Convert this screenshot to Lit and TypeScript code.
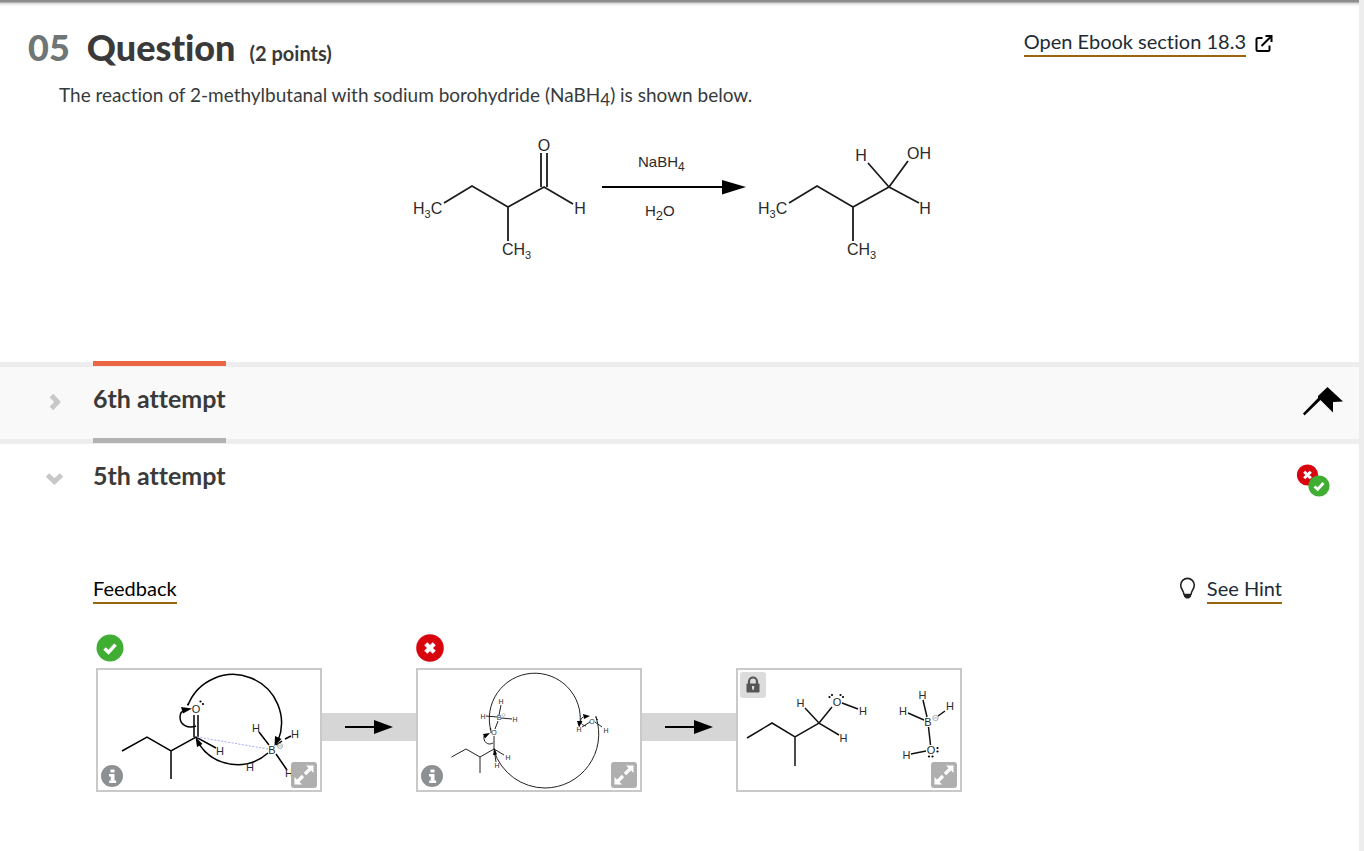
import { LitElement, html, css, svg } from "lit";
import { customElement, property } from "lit/decorators.js";

type Dir = "right" | "down";

const check = svg`<path d="M8.5 14.5 12.5 18.2 19.5 10.6" fill="none" stroke="#fff" stroke-width="3.6"/>`;
const cross = svg`<path d="M9.8 9.8 18.2 18.2 M18.2 9.8 9.8 18.2" fill="none" stroke="#fff" stroke-width="4.4"/>`;

const labels = (size: number, items: [number, number, string][]) =>
  items.map(([x, y, t]) => svg`<text x=${x} y=${y} font-size=${size} text-anchor="middle">${t}</text>`);

const dots = (items: [number, number][], r = 1.1) =>
  items.map(([x, y]) => svg`<circle cx=${x} cy=${y} r=${r} fill="#000"/>`);

@customElement("status-icon")
export class StatusIcon extends LitElement {
  @property() kind: "ok" | "bad" = "ok";

  static styles = css`
    :host { display: block; line-height: 0; }
    svg { display: block; width: 28px; height: 28px; }
  `;

  render() {
    return this.kind === "ok"
      ? html`<svg viewBox="0 0 28 28" role="img" aria-label="Correct"><circle cx="14" cy="14" r="13.5" fill="#3fae33"/>${check}</svg>`
      : html`<svg viewBox="0 0 28 28" role="img" aria-label="Incorrect"><circle cx="14" cy="14" r="13.8" fill="#d8050f"/>${cross}</svg>`;
  }
}

@customElement("app-root")
export class AppRoot extends LitElement {
  static styles = css`
    :host {
      display: block;
      box-sizing: border-box;
      min-height: 100vh;
      border-right: 5px solid #ededed;
      background: #fff linear-gradient(#8b8b8b 0, #8f8f8f 2px, #d4d4d4 3px, #f4f4f4 5px, #fff 7px) no-repeat;
      color: #373a3c;
      font-family: Lato, "Liberation Sans", sans-serif;
      font-size: 19px;
      line-height: 24px;
      font-variant-ligatures: none;
    }
    h1, h2, p { margin: 0; }
    button { font: inherit; font-variant-ligatures: none; color: inherit; background: none; border: 0; padding: 0; margin: 0; cursor: pointer; text-align: left; }
    svg { display: block; }

    .head { display: flex; justify-content: space-between; align-items: flex-start; padding: 25px 86px 0 28px; }
    .title { display: flex; align-items: baseline; font-size: 36px; line-height: 44px; font-weight: 900; color: #3a3a3a; }
    .number { color: #6f7676; font-weight: 900; margin-right: 17px; }
    .points { font-size: 20px; font-weight: 700; margin-left: 14px; }
    .ebook { display: flex; align-items: center; gap: 9px; padding-top: 4px; color: #212b36; text-decoration: none; font-size: 20px; }
    .under { padding-bottom: 2px; border-bottom: 2px solid #99660f; }
    .ebook svg { width: 18px; height: 18px; }
    .prompt { padding: 13px 59px 0; font-size: 19px; line-height: 26px; margin-top: -6px; }
    .prompt sub { font-size: 17px; line-height: 0; vertical-align: -4px; }
    .scheme { display: flex; justify-content: center; padding: 22px 0 92px; }
    .scheme svg { width: 560px; height: 140px; }

    .attempt { display: flex; align-items: flex-start; border-top: 5px solid #ededed; min-height: 72px; box-sizing: content-box; }
    .shaded { background: #f9f9f9; }
    .chevron { width: 93px; padding: 24px 0 0 45px; box-sizing: border-box; }
    .chevron svg { width: 20px; height: 20px; }
    .tab { border-top: 5px solid #ec6645; margin-top: -6px; padding-top: 17px; font-size: 25px; line-height: 30px; font-weight: 700; color: #3a3a3a; }
    .past { border-top-color: #b2b2b2; }
    .mark { margin-left: auto; }
    .pin { padding: 18px 15px 0 0; }
    .mixed { padding: 19px 29px 0 0; }

    .tools { display: flex; justify-content: space-between; padding: 60px 77px 0 93px; font-size: 20px; color: #000; }
    .hint { display: flex; align-items: flex-start; gap: 11px; color: #212b36; }
    .bulb { width: 17px; height: 24px; }

    .steps { display: flex; align-items: flex-end; padding: 30px 40px 59px 96px; }
    .step { width: 226px; }
    .step status-icon { margin-bottom: 6px; }
    .card { position: relative; box-sizing: border-box; height: 124px; border: 2px solid #c9c9c9; background: #fff; }
    .drawing { width: 222px; height: 120px; }
    .corner { position: absolute; display: block; }
    .corner svg { width: 26px; height: 26px; }
    .info { left: 1px; bottom: 1px; }
    .expand { right: 3px; bottom: 2px; }
    .lock { left: 2px; top: 2px; }
    .link { width: 94px; height: 28px; background: #d6d6d6; margin-bottom: 51px; }
    text { font-family: "Liberation Sans", Arial, sans-serif; fill: #2b2b2b; }
  `;

  private chevron(dir: Dir) {
    const d = dir === "right" ? "M6.5 4.5 12.5 11 6.5 17.5" : "M2.5 7 9.5 13.5 16.5 7";
    return html`<svg viewBox="0 0 20 20" aria-hidden="true"><path d=${d} fill="none" stroke="#c8c8c8" stroke-width="5"/></svg>`;
  }

  private reaction() {
    return html`<svg viewBox="400 130 560 140" role="img" aria-label="2-methylbutanal is reduced to 2-methylbutan-1-ol">
      <g fill="none" stroke="#1c1c1c" stroke-width="1.8">
        <path d="M444 203 472 186 508 207 544 187 573 204 M508 207V241 M541 187V153 M547 187V153"/>
        <path d="M789 203 817 186 853 207 889 187 919 203 M853 207V241 M889 187 868 163 M889 187 908 161"/>
        <path d="M602 187H724" stroke="#000" stroke-width="2"/>
      </g>
      <path d="M722 180 746 187 722 194.500Z" fill="#000"/>
      <g font-size="16">
        <text x="413" y="214">H<tspan font-size="11" dy="4">3</tspan><tspan dy="-4">C</tspan></text>
        <text x="502" y="255">CH<tspan font-size="11" dy="4">3</tspan></text>
        <text x="758" y="214">H<tspan font-size="11" dy="4">3</tspan><tspan dy="-4">C</tspan></text>
        <text x="847" y="255">CH<tspan font-size="11" dy="4">3</tspan></text>
        <text x="907" y="159">OH</text>
        <text x="638" y="167" font-size="15">NaBH<tspan font-size="12" dy="4">4</tspan></text>
        <text x="645" y="216" font-size="15">H<tspan font-size="13" dy="4">2</tspan><tspan dy="-4">O</tspan></text>
      </g>
      ${labels(16, [[544, 151, "O"], [580, 214, "H"], [861, 161, "H"], [925, 214, "H"]])}
    </svg>`;
  }

  private stepOne() {
    return html`<svg class="drawing" viewBox="98 670 222 120" role="img" aria-label="Step 1 mechanism">
      <g fill="none" stroke="#000" stroke-width="1.5">
        <path d="M122 751 147 737 171 751 196 737 216 748 M171 751V779 M194 737V715 M198 737V715"/>
        <path d="M259 732 269 745 M276 745 282 741 M285 739 291 736 M276 754 287 770"/>
        <path d="M188 705A48 48 0 1 1 278 741"/>
        <path d="M268 753A46 46 0 0 1 199 744"/>
        <path d="M196 726C188 729 180 725 180 717C180 713 182 711 185 710"/>
        <path d="M197 737 268 749" stroke="#a9a9ff" stroke-width="1" stroke-dasharray="2 1.500"/>
        <circle cx="280" cy="746" r="2.500" stroke="#888" stroke-width="0.700"/>
        <path d="M278.500 746H281.500" stroke="#888" stroke-width="0.700"/>
      </g>
      <path d="M181 707 192 708.500 183 713.500Z M195.500 737 197 747 202.500 744Z M274.500 746 275 736 281.500 739Z"/>
      ${dots([[188, 704.5], [200.5, 701.5], [203, 704]])}
      ${labels(11, [[196, 713, "O"], [220, 755, "H"], [272, 754, "B"], [256, 732, "H"], [295, 738, "H"], [250, 771, "H"], [289, 777, "H"]])}
    </svg>`;
  }

  private stepTwo() {
    return html`<svg class="drawing" viewBox="418 670 222 120" role="img" aria-label="Step 2 mechanism">
      <g fill="none" stroke="#222" stroke-width="1">
        <path d="M451.500 757 466 749 480 757 494 749 504 755 M480 757V773 M494 736V749L496 762"/>
        <path d="M501 705 499 715 M486 716 497 717 M501 718 512 719 M498 721 495 729"/>
        <path d="M491 731A45.500 45.500 0 1 1 580 724"/>
        <path d="M494 751A54 54 0 0 0 545 788A54 54 0 0 0 596 717"/>
        <path d="M493 743C488 746 483 742 484 736"/>
        <path d="M595 722 602 727 M582 727 590 722 M586 726C580 725 579 720 583 717"/>
        <circle cx="503.500" cy="715" r="1.500" stroke="#888" stroke-width="0.500"/>
      </g>
      <path d="M490 733 483 734 485 738.500Z M494.500 748 493 755 497 754.500Z M579 727.500 577 721 582.500 721Z M590 716 583 714 584 719Z"/>
      ${dots([[490.5, 729], [491, 732], [596, 717], [597, 719.5]], 0.8)}
      ${labels(7, [[494, 735, "O"], [508, 760, "H"], [497, 768, "H"], [501, 704, "H"], [483, 719, "H"], [499, 720, "B"], [515, 722, "H"], [579, 732, "H"], [592, 724, "O"], [606, 733, "H"]])}
    </svg>`;
  }

  private stepThree() {
    return html`<svg class="drawing" viewBox="738 670 222 120" role="img" aria-label="Products">
      <g fill="none" stroke="#111" stroke-width="1.5">
        <path d="M747 738 772 723 795 737 819 723 839 735 M795 737V766 M819 723 805 708 M819 723 832 707 M842 703 858 709"/>
        <path d="M923 700 927 717 M908 713 924 720 M938 716 945 711 M928.500 727 930.500 745 M911 754 926 751"/>
        <circle cx="935.500" cy="718" r="2.700" stroke="#888" stroke-width="0.700"/>
        <path d="M934 718H937" stroke="#888" stroke-width="0.700"/>
      </g>
      ${dots([[829.5, 697], [832, 695], [840.5, 695], [843, 697], [937.5, 748], [937.5, 751.5], [929, 756.5], [932.5, 756.5]])}
      ${labels(11, [[837, 706, "O"], [800.5, 707, "H"], [863, 715, "H"], [843.5, 742, "H"], [928, 726, "B"], [922.5, 699, "H"], [903, 715, "H"], [950, 710, "H"], [931, 754, "O"], [906.5, 759, "H"]])}
    </svg>`;
  }

  private info() {
    return html`<button class="corner info" aria-label="Information">
      <svg viewBox="0 0 26 26"><circle cx="13" cy="13" r="11" fill="#8c9092"/><path d="M11.500 6.500h4v3h-4z M10 11h5.500v6.500h1.700v2.500h-7v-2.500h1.600v-4h-1.800z" fill="#fff"/></svg>
    </button>`;
  }

  private expand() {
    return html`<button class="corner expand" aria-label="Expand">
      <svg viewBox="0 0 26 26"><rect width="26" height="26" rx="3" fill="#afafaf"/><path d="M15 3.500H22.500V11Z M3.500 15V22.500H11Z" fill="#fff"/><path d="M14 12 20 6 M6 20 12 14" stroke="#fff" stroke-width="3.200"/></svg>
    </button>`;
  }

  private lock() {
    return html`<span class="corner lock">
      <svg viewBox="0 0 26 26" role="img" aria-label="Locked"><rect width="26" height="26" rx="3" fill="#dcdcdc"/><path d="M9 12V9.500a4 4 0 0 1 8 0V12" fill="none" stroke="#555" stroke-width="2.200"/><rect x="6.500" y="11.500" width="13" height="9" rx="1" fill="#555"/><path d="M12 14h2.200v1.800l-.6 2.200h-1l-.6-2.200z" fill="#dcdcdc"/></svg>
    </span>`;
  }

  private link() {
    return html`<div class="link"><svg viewBox="0 0 94 28" aria-hidden="true"><path d="M23 14H56" stroke="#000" stroke-width="2"/><path d="M52 7 71 14 52 21Z"/></svg></div>`;
  }

  render() {
    return html`
      <header class="head">
        <h1 class="title"><span class="number">05</span><span>Question</span><span class="points">(2 points)</span></h1>
        <a class="ebook" href="#"><span class="under">Open Ebook section 18.3</span>
          <svg viewBox="0 0 18 18" aria-hidden="true"><g fill="none" stroke="#000" stroke-width="2"><path d="M7.500 4H3Q1.500 4 1.500 5.500V15.500Q1.500 17 3 17H13Q14.500 17 14.500 15.500V11.500 M6.500 12 16 2.500 M10.500 2H16.500V8"/></g></svg>
        </a>
      </header>
      <p class="prompt">The reaction of 2-methylbutanal with sodium borohydride (NaBH<sub>4</sub>) is shown below.</p>
      <div class="scheme">${this.reaction()}</div>

      <section class="attempt shaded">
        <button class="chevron" aria-label="Expand 6th attempt">${this.chevron("right")}</button>
        <h2 class="tab">6th attempt</h2>
        <div class="mark pin">
          <svg width="42" height="32" viewBox="1302 385 42 32" role="img" aria-label="Current attempt"><path d="M1327.500 387 1343 401.500 1333 402V412.500L1320.500 400 1304.500 415.500 1303 413.500 1318 398V396Z"/></svg>
        </div>
      </section>
      <section class="attempt">
        <button class="chevron" aria-label="Collapse 5th attempt">${this.chevron("down")}</button>
        <h2 class="tab past">5th attempt</h2>
        <div class="mark mixed">
          <svg width="34" height="34" viewBox="0 0 34 34" role="img" aria-label="Partially correct">
            <circle cx="11.500" cy="12" r="10.600" fill="#d8050f"/><path d="M8.200 8.700 14.800 15.300 M14.800 8.700 8.200 15.300" stroke="#fff" stroke-width="3"/>
            <circle cx="23" cy="23" r="10.600" fill="#3fae33"/><path d="M18.500 23.500 21.700 26.200 27.500 20" fill="none" stroke="#fff" stroke-width="2.800"/>
          </svg>
        </div>
      </section>

      <div class="tools">
        <button class="under">Feedback</button>
        <button class="hint">
          <svg class="bulb" viewBox="0 0 17 24" aria-hidden="true"><path d="M5 18.500C5 15 1.700 13 1.700 9.200A6.800 6.800 0 0 1 15.300 9.200C15.300 13 12 15 12 18.500Z" fill="none" stroke="#222" stroke-width="1.600"/><path d="M5 18.500H12V20.500L10 22.500H7L5 20.500Z" fill="#222"/></svg>
          <span class="under">See Hint</span>
        </button>
      </div>

      <div class="steps">
        <div class="step"><status-icon kind="ok"></status-icon><div class="card">${this.stepOne()}${this.info()}${this.expand()}</div></div>
        ${this.link()}
        <div class="step"><status-icon kind="bad"></status-icon><div class="card">${this.stepTwo()}${this.info()}${this.expand()}</div></div>
        ${this.link()}
        <div class="step"><div class="card">${this.stepThree()}${this.lock()}${this.expand()}</div></div>
      </div>
    `;
  }
}
